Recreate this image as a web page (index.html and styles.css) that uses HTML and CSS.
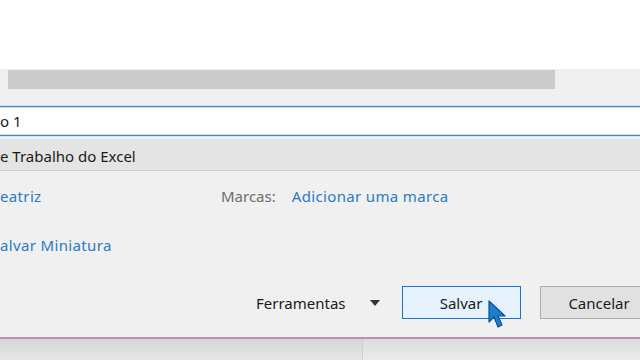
FILE: index.html
```html
<!DOCTYPE html>
<html lang="pt-BR">
<head>
    <meta charset="UTF-8">
    <title>Salvar como</title>
    <link rel="stylesheet" href="styles.css">
</head>
<body>
    <div class="top"></div>

    <div class="dialog">
        <div class="path-row">
            <div class="path-bar"></div>
        </div>

        <div class="name-field">o 1</div>

        <div class="type-field">e Trabalho do Excel</div>

        <div class="meta-row">
            <span class="link author">eatriz</span>
            <span class="label">Marcas:</span>
            <span class="link">Adicionar uma marca</span>
        </div>

        <div class="thumb-row">
            <span class="link">alvar Miniatura</span>
        </div>

        <div class="button-row">
            <span class="tools">Ferramentas</span>
            <svg class="caret" width="10" height="6" viewBox="0 0 10 6"><path d="M0 0h10L5 6z" fill="#333"/></svg>
            <button class="btn primary">Salvar</button>
            <button class="btn">Cancelar</button>
            <svg class="cursor" width="20" height="30" viewBox="0 0 20 30">
                <path d="M2 1 L2 22 L7 17 L11 27 L15 25 L11 16 L18 16 Z" fill="#1e7fd0" stroke="#0b4f8a" stroke-width="1.2" stroke-linejoin="round"/>
            </svg>
        </div>
    </div>

    <div class="footer">
        <div class="footer-left"></div>
        <div class="footer-right"></div>
    </div>
</body>
</html>
```

FILE: styles.css
```css
body {
    margin: 0;
    width: 640px;
    height: 360px;
    overflow: hidden;
    font-family: "Noto Sans", "Open Sans", sans-serif;
    font-size: 15px;
    color: #1a1a1a;
    background: #fff;
}
.top {
    height: 69px;
    background: #fff;
}
.dialog {
    height: 268px;
    background: #f0f0f0;
    display: flex;
    flex-direction: column;
    position: relative;
}
.path-row {
    padding: 1px 0 0 8px;
}
.path-bar {
    width: 547px;
    height: 19px;
    background: #cbcbcb;
}
.name-field {
    margin-top: 17px;
    height: 28px;
    line-height: 29px;
    background: #fff;
    border-top: 1px solid #4a87bd;
    border-bottom: 1px solid #4a87bd;
    box-shadow: inset 0 1px 0 #bfe0f5, inset 0 -1px 0 #bfe0f5, 0 -1px 0 #cfe5f5, 0 1px 0 #cfe5f5;
}
.type-field {
    margin-top: 3px;
    height: 31px;
    line-height: 34px;
    background: #e4e4e4;
    border-bottom: 1px solid #cfcfcf;
}
.meta-row {
    display: flex;
    margin-top: 12px;
    height: 26px;
    line-height: 26px;
}
.author {
    width: 221px;
}
.label {
    color: #6d6d6d;
    margin-right: 16px;
}
.link {
    color: #2a7ac4;
    letter-spacing: 0.35px;
}
.thumb-row {
    margin-top: 23px;
    height: 26px;
    line-height: 26px;
}
.button-row {
    display: flex;
    align-items: center;
    margin-top: 28px;
    padding-left: 256px;
    height: 33px;
}
.button-row > * {
    flex-shrink: 0;
}
.tools {
    color: #1a1a1a;
}
.caret {
    margin: 0 22px 0 24px;
}
.btn {
    font-family: inherit;
    font-size: 15px;
    height: 33px;
    width: 119px;
    border: 1px solid #adadad;
    background: #e1e1e1;
    color: #1a1a1a;
    padding: 0;
}
.btn.primary {
    background: #e5f1fb;
    border-color: #1d73c5;
    margin-right: 19px;
}
.cursor {
    position: absolute;
    left: 487px;
    top: 231px;
}
.footer {
    display: flex;
    height: 21px;
    border-top: 2px solid #c08db3;
}
.footer-left {
    width: 362px;
    background: linear-gradient(#d6d6d6, #e6e6e6);
    border-right: 1px solid #cfcfcf;
}
.footer-right {
    flex: 1;
    background: linear-gradient(#dcdcdc, #ebebeb);
}
```
